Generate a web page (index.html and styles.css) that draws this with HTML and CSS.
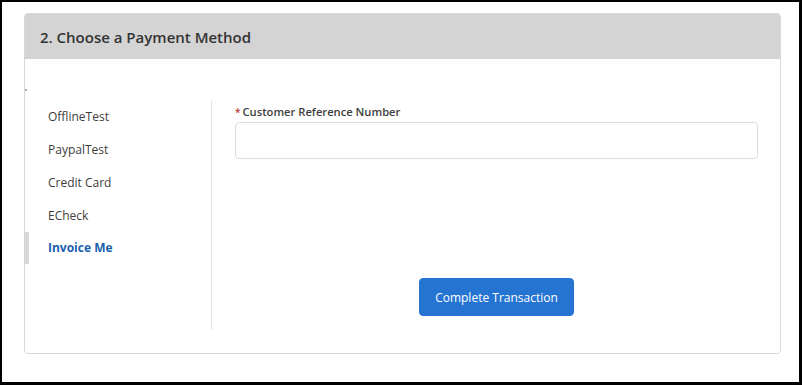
FILE: index.html
```html
<!DOCTYPE html>
<html lang="en">
<head>
  <meta charset="UTF-8" />
  <title>Choose a Payment Method</title>
  <link rel="stylesheet" href="styles.css">
</head>
<body>
  <div class="frame">
    <div class="card">
      <div class="card-header">2. Choose a Payment Method</div>
      <div class="card-body">
        <span class="tick"></span>
        <div class="pay-row">
          <ul class="methods">
            <li>OfflineTest</li>
            <li>PaypalTest</li>
            <li>Credit Card</li>
            <li>ECheck</li>
            <li class="active">Invoice Me</li>
          </ul>
          <div class="pay-form">
            <label class="field-label"><abbr>*</abbr>Customer Reference Number</label>
            <input class="field-input" type="text" />
            <div class="actions">
              <button class="btn-brand">Complete Transaction</button>
            </div>
          </div>
        </div>
      </div>
    </div>
  </div>
</body>
</html>
```

FILE: styles.css
```css
html, body {
  margin: 0;
  padding: 0;
  background: #fff;
  font-family: 'Open Sans', 'Noto Sans', sans-serif;
  color: #3e3e3c;
}
.frame {
  box-sizing: border-box;
  height: 385px;
  border-style: solid;
  border-color: #000;
  border-width: 2px 3px 3px 2px;
  padding: 11px 18px 0 22px;
}
.card {
  box-sizing: border-box;
  height: 341px;
  border: 1px solid #d8d8d8;
  border-radius: 4px;
  overflow: hidden;
}
.card-header {
  height: 45px;
  background: #d4d4d4;
  padding-left: 15px;
  display: flex;
  align-items: center;
  font-size: 15px;
  font-weight: 600;
  color: #333;
}
.card-body {
  position: relative;
  padding-top: 41px;
}
.tick {
  position: absolute;
  left: 0;
  top: 30px;
  width: 2px;
  height: 2px;
  background: #aaa;
}
.pay-row {
  display: flex;
  height: 230px;
}
.methods {
  list-style: none;
  margin: 0;
  padding: 0;
  width: 186px;
  border-right: 1px solid #e5e5e5;
}
.methods li {
  height: 33px;
  line-height: 33px;
  padding-left: 19px;
  border-left: 4px solid transparent;
  font-size: 12px;
}
.methods li.active {
  border-left-color: #d8d8d8;
  color: #1b5faf;
  font-weight: 700;
  height: 32px;
  line-height: 32px;
}
.pay-form {
  flex: 1;
  padding: 4px 22px 0 23px;
}
.field-label {
  display: block;
  font-size: 11.2px;
  font-weight: 600;
  line-height: 16px;
  margin-bottom: 2px;
}
.field-label abbr {
  color: #c23934;
  margin-right: 2px;
  font-size: 10px;
}
.field-input {
  box-sizing: border-box;
  display: block;
  width: 100%;
  height: 37px;
  border: 1px solid #dddbda;
  border-radius: 4px;
  margin: 0;
}
.actions {
  display: flex;
  justify-content: center;
  margin-top: 119px;
}
.btn-brand {
  width: 155px;
  height: 38px;
  background: #2574d1;
  border: 1px solid #2574d1;
  border-radius: 4px;
  color: #fff;
  font-family: inherit;
  font-size: 12px;
}
```
